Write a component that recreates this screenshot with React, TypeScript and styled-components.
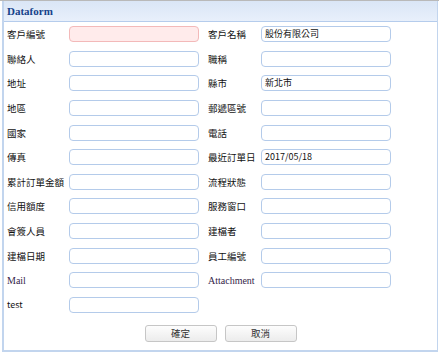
import styled, { createGlobalStyle } from 'styled-components';

const GlobalStyle = createGlobalStyle`
  html, body {
    margin: 0;
    padding: 0;
    background: #ffffff;
  }
  body {
    font-family: "Noto Sans CJK TC", "Liberation Sans", sans-serif;
  }
`;

const Page = styled.div`
  width: 439px;
  height: 354px;
  border-top: 1px solid #b9b9b9;
  box-sizing: border-box;
  padding: 0 1px 0 2px;
`;

const Panel = styled.div`
  height: 351px;
  border: 1px solid #c2d5ee;
  border-top: none;
  border-bottom-width: 2px;
  border-left-width: 2px;
  box-sizing: border-box;
  display: flex;
  flex-direction: column;
`;

const Header = styled.div`
  height: 21px;
  box-sizing: border-box;
  padding: 0 3px;
  display: flex;
  align-items: center;
  background: linear-gradient(#dae6f6, #e8f0fb);
  border-bottom: 1px solid #b5ccec;
  font-family: "Liberation Serif", serif;
  font-weight: bold;
  font-size: 11px;
  color: #15428b;
`;

const Form = styled.div`
  display: grid;
  grid-template-columns: 62px 130px 9px 53px 130px;
  grid-auto-rows: 24.6px;
  align-items: center;
  padding: 0 0 0 3px;
`;

const Label = styled.span<{ $serif?: boolean; $small?: boolean }>`
  font-family: ${(p) =>
    p.$serif ? '"Liberation Serif", serif' : '"Noto Sans CJK TC", "Liberation Sans", sans-serif'};
  font-size: ${(p) => (p.$small ? '9px' : p.$serif ? '10px' : '9.5px')};
  color: ${(p) => (p.$serif ? '#35254a' : '#111')};
  white-space: nowrap;
`;

const Input = styled.div<{ $required?: boolean }>`
  height: 16px;
  box-sizing: border-box;
  border: 1px solid ${(p) => (p.$required ? '#f3b9b9' : '#b4cbea')};
  background: ${(p) => (p.$required ? '#ffebeb' : '#fff')};
  border-radius: 4px;
  padding: 0 3px;
  font-size: 9px;
  line-height: 14px;
  color: #111;
  overflow: hidden;
  white-space: nowrap;
`;

const Spacer = styled.span``;

const Buttons = styled.div`
  display: flex;
  justify-content: center;
  gap: 8px;
  margin-top: 8px;
`;

const Button = styled.button`
  width: 72px;
  height: 17px;
  padding: 0;
  border: 1px solid #c6c6c6;
  border-radius: 3px;
  background: linear-gradient(#fdfdfd, #ececec);
  font-family: "Noto Sans CJK TC", "Liberation Sans", sans-serif;
  font-size: 9.5px;
  line-height: 15px;
  color: #333;
`;

type Field = { label: string; value?: string; required?: boolean; serif?: boolean; small?: boolean };

const rows: [Field, Field | null][] = [
  [{ label: '客戶編號', required: true }, { label: '客戶名稱', value: '股份有限公司' }],
  [{ label: '聯絡人' }, { label: '職稱' }],
  [{ label: '地址' }, { label: '縣市', value: '新北市' }],
  [{ label: '地區' }, { label: '郵遞區號' }],
  [{ label: '國家' }, { label: '電話' }],
  [{ label: '傳真' }, { label: '最近訂單日', value: '2017/05/18' }],
  [{ label: '累計訂單金額' }, { label: '流程狀態' }],
  [{ label: '信用額度' }, { label: '服務窗口' }],
  [{ label: '會簽人員' }, { label: '建檔者' }],
  [{ label: '建檔日期' }, { label: '員工編號' }],
  [{ label: 'Mail', serif: true }, { label: 'Attachment', serif: true }],
  [{ label: 'test', small: true }, null],
];

const renderField = (f: Field) => [
  <Label key={f.label + '-l'} $serif={f.serif} $small={f.small}>
    {f.label}
  </Label>,
  <Input key={f.label + '-i'} $required={f.required}>
    {f.value}
  </Input>,
];

export default function App() {
  return (
    <Page>
      <GlobalStyle />
      <Panel>
        <Header>Dataform</Header>
        <Form>
          {rows.map(([a, b], i) => [
            ...renderField(a),
            <Spacer key={'s' + i} />,
            ...(b ? renderField(b) : [<Spacer key={'e1' + i} />, <Spacer key={'e2' + i} />]),
          ])}
        </Form>
        <Buttons>
          <Button>確定</Button>
          <Button>取消</Button>
        </Buttons>
      </Panel>
    </Page>
  );
}
